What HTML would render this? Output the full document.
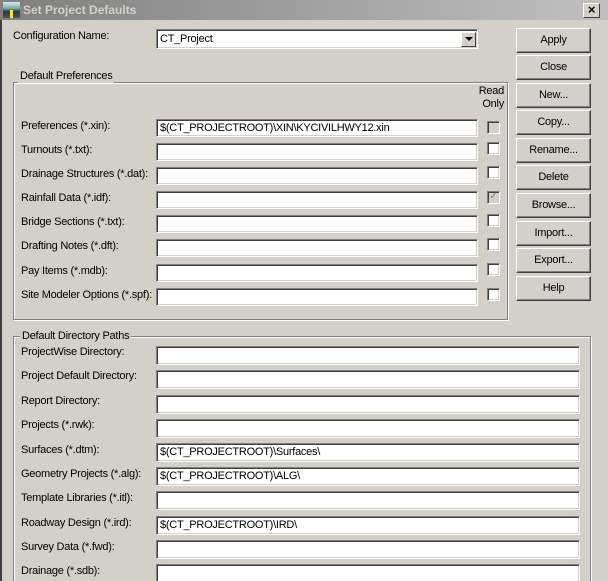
<!DOCTYPE html>
<html><head><meta charset="utf-8"><style>
*{box-sizing:border-box;margin:0;padding:0}
html,body{width:608px;height:581px;overflow:hidden}
body{background:#d4d0c8;font-family:"Liberation Sans",Arial,sans-serif;font-size:11px;letter-spacing:-0.25px;color:#000;position:relative}
.a{position:absolute}
.title{left:0;top:0;width:608px;height:20px;background:linear-gradient(90deg,#7f7f7f,#c0c0c0);color:#d4d0c8;font-weight:bold;font-size:12px;letter-spacing:0;line-height:20px;padding-left:23px}
.lb{position:absolute;left:0;top:20px;width:3px;height:561px;background:#404040;border-right:1px solid #d4d0c8}
.fld{position:absolute;background:#fff;border-top:1px solid #808080;border-left:1px solid #808080;border-right:1px solid #fff;border-bottom:1px solid #fff;box-shadow:inset 1px 1px 0 #404040,inset -1px -1px 0 #d4d0c8;padding-left:3px;line-height:16px;white-space:nowrap;overflow:hidden}
.btn{position:absolute;left:516px;width:75px;height:25px;background:#d4d0c8;border-top:1px solid #fff;border-left:1px solid #fff;border-right:1px solid #404040;border-bottom:1px solid #404040;box-shadow:inset -1px -1px 0 #808080;text-align:center;line-height:22px}
.grp{position:absolute;border:1px solid #808080;box-shadow:1px 1px 0 #fff,inset 1px 1px 0 #fff}
.gl{position:absolute;background:#d4d0c8;padding:0 2px;line-height:13px}
.cb{position:absolute;left:487px;width:13px;height:13px;background:#fff;border-top:1px solid #808080;border-left:1px solid #808080;border-right:1px solid #fff;border-bottom:1px solid #fff;box-shadow:inset 1px 1px 0 #404040,inset -1px -1px 0 #d4d0c8}
.lab{position:absolute;left:21px;line-height:14px;white-space:nowrap}
</style></head><body>
<div class="a title">Set Project Defaults</div>
<div class="a" style="left:3px;top:2px;width:17px;height:16px;background:linear-gradient(#dfe8f0 0,#7aa 40%,#333 60%,#555 100%)"></div>
<div class="a" style="left:10px;top:10px;width:3px;height:8px;background:#ee3"></div>
<div class="a" style="left:583px;top:3px;width:17px;height:15px;background:#d4d0c8;border-top:1px solid #fff;border-left:1px solid #fff;border-right:1px solid #404040;border-bottom:1px solid #404040;font-size:13px;font-weight:bold;line-height:12px;text-align:center">×</div>
<div class="lb"></div>

<div class="a" style="left:13px;top:29px;line-height:14px">Configuration Name:</div>
<div class="fld" style="left:156px;top:29px;width:322px;height:20px;line-height:18px">CT_Project</div>
<div class="a" style="left:461px;top:32px;width:15px;height:15px;background:#d4d0c8;border-top:1px solid #fff;border-left:1px solid #fff;border-right:1px solid #404040;border-bottom:1px solid #404040"><div style="position:absolute;left:3px;top:4px;border-left:4px solid transparent;border-right:4px solid transparent;border-top:4px solid #000"></div></div>

<div class="btn" style="top:28px">Apply</div>
<div class="btn" style="top:55px">Close</div>
<div class="btn" style="top:83px">New...</div>
<div class="btn" style="top:110px">Copy...</div>
<div class="btn" style="top:138px">Rename...</div>
<div class="btn" style="top:165px">Delete</div>
<div class="btn" style="top:193px">Browse...</div>
<div class="btn" style="top:221px">Import...</div>
<div class="btn" style="top:248px">Export...</div>
<div class="btn" style="top:276px">Help</div>

<div class="grp" style="left:13px;top:82px;width:495px;height:238px"></div>
<div class="gl" style="left:18px;top:70px">Default Preferences</div>
<div class="a" style="left:470px;top:85px;width:34px;text-align:right;line-height:13px">Read<br>Only</div>

<div class="lab" style="top:119px">Preferences (*.xin):</div>
<div class="fld" style="left:156px;top:119px;width:322px;height:18px">$(CT_PROJECTROOT)\XIN\KYCIVILHWY12.xin</div>
<div class="cb" style="top:121px;background:#d4d0c8"></div>
<div class="lab" style="top:143px">Turnouts (*.txt):</div>
<div class="fld" style="left:156px;top:143px;width:322px;height:18px"></div>
<div class="cb" style="top:142px"></div>
<div class="lab" style="top:167px">Drainage Structures (*.dat):</div>
<div class="fld" style="left:156px;top:167px;width:322px;height:18px"></div>
<div class="cb" style="top:166px"></div>
<div class="lab" style="top:191px">Rainfall Data (*.idf):</div>
<div class="fld" style="left:156px;top:191px;width:322px;height:18px"></div>
<div class="cb" style="top:191px;background:#d4d0c8;color:#808080;font-size:10px;line-height:10px;text-align:center">✓</div>
<div class="lab" style="top:215px">Bridge Sections (*.txt):</div>
<div class="fld" style="left:156px;top:215px;width:322px;height:18px"></div>
<div class="cb" style="top:214px"></div>
<div class="lab" style="top:239px">Drafting Notes (*.dft):</div>
<div class="fld" style="left:156px;top:239px;width:322px;height:18px"></div>
<div class="cb" style="top:238px"></div>
<div class="lab" style="top:264px">Pay Items (*.mdb):</div>
<div class="fld" style="left:156px;top:264px;width:322px;height:18px"></div>
<div class="cb" style="top:263px"></div>
<div class="lab" style="top:288px">Site Modeler Options (*.spf):</div>
<div class="fld" style="left:156px;top:288px;width:322px;height:18px"></div>
<div class="cb" style="top:288px"></div>

<div class="grp" style="left:13px;top:336px;width:578px;height:260px"></div>
<div class="gl" style="left:20px;top:330px">Default Directory Paths</div>

<div class="lab" style="top:345px">ProjectWise Directory:</div>
<div class="fld" style="left:156px;top:346px;width:424px;height:19px"></div>
<div class="lab" style="top:369px">Project Default Directory:</div>
<div class="fld" style="left:156px;top:370px;width:424px;height:19px"></div>
<div class="lab" style="top:394px">Report Directory:</div>
<div class="fld" style="left:156px;top:395px;width:424px;height:19px"></div>
<div class="lab" style="top:418px">Projects (*.rwk):</div>
<div class="fld" style="left:156px;top:419px;width:424px;height:19px"></div>
<div class="lab" style="top:443px">Surfaces (*.dtm):</div>
<div class="fld" style="left:156px;top:443px;width:424px;height:19px">$(CT_PROJECTROOT)\Surfaces\</div>
<div class="lab" style="top:467px">Geometry Projects (*.alg):</div>
<div class="fld" style="left:156px;top:467px;width:424px;height:19px">$(CT_PROJECTROOT)\ALG\</div>
<div class="lab" style="top:491px">Template Libraries (*.itl):</div>
<div class="fld" style="left:156px;top:491px;width:424px;height:19px"></div>
<div class="lab" style="top:516px">Roadway Design (*.ird):</div>
<div class="fld" style="left:156px;top:516px;width:424px;height:19px">$(CT_PROJECTROOT)\IRD\</div>
<div class="lab" style="top:540px">Survey Data (*.fwd):</div>
<div class="fld" style="left:156px;top:540px;width:424px;height:19px"></div>
<div class="lab" style="top:564px">Drainage (*.sdb):</div>
<div class="fld" style="left:156px;top:564px;width:424px;height:19px"></div>
</body></html>
